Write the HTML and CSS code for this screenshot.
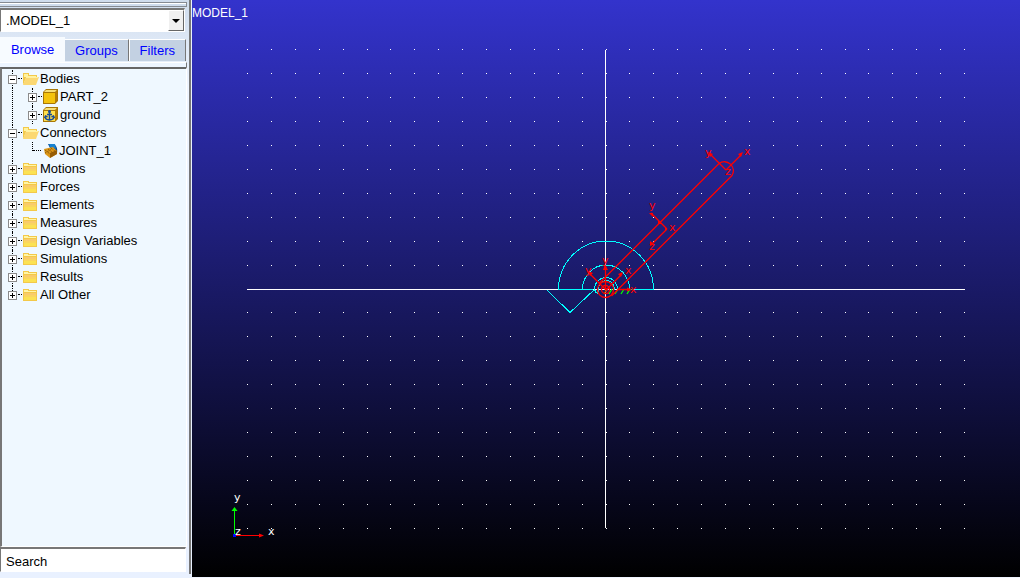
FILE: index.html
```html
<!DOCTYPE html>
<html lang="en">
<head>
<meta charset="utf-8">
<title>Model Browser</title>
<link rel="stylesheet" href="styles.css">
</head>
<body>
<svg class="defs" aria-hidden="true">
  <symbol id="folder" viewBox="0 0 14 12">
    <path fill="#f3c94a" d="M0 0h6v1h8v11H0z"/>
    <path fill="#fff6a8" d="M1 1h4v1h8v1H1z"/>
    <path fill="#f9cb6c" d="M1 4h12v3H1z"/>
    <path fill="#fad55f" d="M1 6h12v2H1z"/>
    <path fill="#fbe253" d="M1 8h12v3H1z"/>
  </symbol>
  <symbol id="open" viewBox="0 0 16 12">
    <path fill="#f3c94a" d="M0 0h6v2h8v3H3L0 12z"/>
    <path fill="#fff3a0" d="M1 1h4v2h8v1H1z"/>
    <path fill="#fbd873" d="M3 4h13l-3 8H0z"/>
    <path fill="#fff0a0" d="M3 4h12v1H3z"/>
  </symbol>
  <symbol id="part" viewBox="0 0 16 16">
    <path fill="#a87706" d="M0 3l3-3h12v12l-3 3H0z"/>
    <path fill="#f7df78" d="M1 3l2-2h11l-2 2z"/>
    <path fill="#f4c30d" d="M1 4h11v10H1z"/>
    <path fill="#b57d06" d="M12 4l2-3v10l-2 3z"/>
  </symbol>
  <symbol id="anchor" viewBox="0 0 16 16">
    <use href="#part" width="16" height="16"/>
    <path fill="#ffe04d" d="M1 4h11v10H1z"/>
    <path fill="none" stroke="#164a9c" stroke-width="1.5" d="M6.500 5v8M4 7.500h5M2 9.500c0 4.500 9 4.500 9 0M1.500 11l1-2 2 1M8.500 10l2-1 1 2"/>
    <circle cx="6.500" cy="4.500" r="1.500" fill="#164a9c"/>
  </symbol>
  <symbol id="joint" viewBox="0 0 16 16">
    <path fill="#074a93" d="M5 1h4c4 0 6 4 5 9l-2 1V7L7 5z"/>
    <path fill="#1682d1" d="M6 1h6l1 5-2-1-1 1-3-2z"/>
    <path fill="#dc9617" d="M1 6l9-2 4 4v3l-7 4-5-4z"/>
    <path fill="#965c05" d="M7 10l7-3v4l-7 4z"/>
    <path stroke="#805006" stroke-dasharray="1 1" d="M2 7l5 4M5 6l5 4M8 5l5 4M2 10l7-4"/>
  </symbol>
</svg>
<div class="app">
  <aside class="sidebar">
    <div class="panel">
      <div class="grip"></div>
      <div class="combo">
        <select class="model" aria-label="Model"><option>.MODEL_1</option></select>
        <span class="arrow" aria-hidden="true"><svg width="8" height="4" viewBox="0 0 8 4"><path d="M0 0h8L4 4z"/></svg></span>
      </div>
      <nav class="tabs">
        <button class="tab active">Browse</button>
        <button class="tab">Groups</button>
        <button class="tab filters">Filters</button>
      </nav>
      <div class="edge"></div>
      <ul class="tree">
        <li class="row"><button class="box minus" aria-label="Collapse Bodies"></button><svg class="icon"><use href="#open" width="16" height="12"/></svg><span class="label">Bodies</span></li>
        <li class="row child"><button class="box" aria-label="Expand PART_2"></button><svg class="cube"><use href="#part" width="16" height="16"/></svg><span class="label">PART_2</span></li>
        <li class="row child"><button class="box" aria-label="Expand ground"></button><svg class="cube"><use href="#anchor" width="16" height="16"/></svg><span class="label">ground</span></li>
        <li class="row"><button class="box minus" aria-label="Collapse Connectors"></button><svg class="icon"><use href="#open" width="16" height="12"/></svg><span class="label">Connectors</span></li>
        <li class="row child leaf"><svg class="cube"><use href="#joint" width="16" height="16"/></svg><span>JOINT_1</span></li>
        <li class="row"><button class="box" aria-label="Expand Motions"></button><svg class="icon"><use href="#folder" width="14" height="12"/></svg><span class="label">Motions</span></li>
        <li class="row"><button class="box" aria-label="Expand Forces"></button><svg class="icon"><use href="#folder" width="14" height="12"/></svg><span class="label">Forces</span></li>
        <li class="row"><button class="box" aria-label="Expand Elements"></button><svg class="icon"><use href="#folder" width="14" height="12"/></svg><span class="label">Elements</span></li>
        <li class="row"><button class="box" aria-label="Expand Measures"></button><svg class="icon"><use href="#folder" width="14" height="12"/></svg><span class="label">Measures</span></li>
        <li class="row"><button class="box" aria-label="Expand Design Variables"></button><svg class="icon"><use href="#folder" width="14" height="12"/></svg><span class="label">Design Variables</span></li>
        <li class="row"><button class="box" aria-label="Expand Simulations"></button><svg class="icon"><use href="#folder" width="14" height="12"/></svg><span class="label">Simulations</span></li>
        <li class="row"><button class="box" aria-label="Expand Results"></button><svg class="icon"><use href="#folder" width="14" height="12"/></svg><span class="label">Results</span></li>
        <li class="row last"><button class="box" aria-label="Expand All Other"></button><svg class="icon"><use href="#folder" width="14" height="12"/></svg><span class="label">All Other</span></li>
      </ul>
      <input class="search" type="text" value="Search" aria-label="Search">
    </div>
    <div class="splitter"></div>
  </aside>
  <main class="view">
    <svg class="scene" viewBox="192 0 828 577" preserveAspectRatio="xMinYMin meet" role="img" aria-label="Model view">
      <g id="grid" fill="#fff" shape-rendering="crispEdges"></g>
      <g class="lines">
        <path stroke="#fff" d="M247 289.500H965M605.500 50V528"/>
        <path stroke="#0ff" d="M547.500 290.500L570 312.500L595 289M558.500 289.500A47.500 48.500 0 0 1 653.500 289.500M582.500 289.500A23.500 24.500 0 0 1 629.500 289.500M594.500 289.500A11.500 12 0 0 1 617.500 289.500M598.500 289.500A8 9 0 0 1 614.500 289.500M594.500 289l1 3 2 1 1-3M559 289.500H593M618 289.500H653"/>
      </g>
      <g class="slopes">
        <path stroke="#0f0" d="M604 294l3-5M609 294l3-5M615 294l3-5M621 294l3-5M627 294l3-5"/>
        <path stroke="#f00" d="M599 283.500L719 163.500A9 9 0 0 1 732 175.500L611.500 296M726 170L711 155M726 170L741 155M667 229L651 213M667 229L651 245M605.500 290V266M606 290L589 273M606 290L622 274M617 289.500H631"/>
        <circle cx="605.500" cy="289.500" r="8" stroke="#f00"/>
        <circle cx="605.500" cy="289.500" r="4" stroke="#f00"/>
      </g>
      <path fill="#f00" d="M708 152l5 2-3 3zM743 152l-5 2 3 3zM649 213l4 0 0 4zM650 246l0-5 4 3zM658 221h3v3h-3zM665 228h2v2h-2zM603 270l2-6 3 6zM588 271l5 2-3 3zM623 272l-5 2 3 3zM632 289.500l-5-2v4z"/>
      <g class="axis red">
        <text x="705" y="156">y</text><text x="744" y="155">x</text><text x="725" y="175">z</text>
        <text x="649" y="209">y</text><text x="669" y="231">x</text><text x="649" y="250">z</text>
        <text x="585" y="274">y</text><text x="602" y="264">y</text><text x="625" y="274">x</text><text x="630" y="293">x</text><text x="603" y="294">z</text>
      </g>
      <path d="M234.500 535V509" stroke="#0f0"/><path d="M234.500 507l3 4h-6z" fill="#0f0"/>
      <path d="M235 535.500H260" stroke="#f00"/><path d="M264 535.500l-5-2v4z" fill="#f00"/>
      <path fill="#00f" d="M233 534h3v3h-3z"/>
      <g class="axis white"><text x="234" y="501">y</text><text x="268" y="535">x</text><text x="235" y="535">z</text></g>
      <text class="name" x="192" y="17">MODEL_1</text>
    </svg>
  </main>
</div>
<script src="grid.js"></script>
</body>
</html>
```
FILE: styles.css
```css
* { box-sizing: border-box; }
body { margin: 0; font: 13px/18px "Liberation Sans", Arial, sans-serif; color: #000; background: #f0f5ff; }
button, input, select { font: inherit; border-radius: 0; }
.defs { position: absolute; width: 0; height: 0; }
.app { display: flex; height: 100vh; }
.sidebar { display: flex; flex: 0 0 192px; background: linear-gradient(#cfdced, #eef5ff 15%, #e9f1ff); }
.panel { display: flex; flex-direction: column; flex: 1; min-width: 0; padding-bottom: 6px; }
.grip { height: 5px; margin: 2px 2px 1px 0; border: 1px solid #858a92; border-left: 0; background: #cfdced; box-shadow: inset 0 1px #fff; }
.combo { display: flex; position: relative; height: 24px; margin-right: 4px; border: 1px solid #fff; border-left: 1px solid #777; border-top: 2px solid #777; background: #fff; }
.model { flex: 1; appearance: none; border: 0; padding: 0 5px; background: #fff; color: #000; }
.arrow { position: absolute; right: 0; top: 0; bottom: 0; width: 16px; display: grid; place-items: center; background: #f0f0f0; border: 1px solid #fff; border-right-color: #666; border-bottom-color: #666; pointer-events: none; }
.tabs { display: flex; align-items: flex-end; height: 30px; padding-right: 3px; }
.tab { flex: 63 1 0; height: 22px; margin-bottom: 1px; padding: 0; border: 0; border-top: 1px solid #fff; border-right: 1px solid #777; background: #c3d1e2; color: #00f; }
.active { height: 25px; margin-bottom: 0; flex-grow: 66; border: 0; background: #f7fbff; }
.filters { flex-grow: 56; border-left: 1px solid #fff; }
.edge { height: 5px; margin-right: 2px; border-top: 1px solid #fff; border-right: 1px solid #777; background: #edf5ff; }
.tree { flex: 1; min-height: 0; margin: 0 2px 0 0; padding: 1px 0 0 6px; list-style: none; border-left: 2px solid #777; border-top: 2px solid #666; border-right: 1px solid #fff; border-bottom: 1px solid #fff; background: #eff8ff; }
.row { position: relative; display: flex; align-items: center; height: 18px; white-space: nowrap; }
.row::before { content: ""; position: absolute; left: 4px; top: 0; bottom: 0; border-left: 1px dotted #000; }
.row::after { content: ""; position: absolute; left: 10px; top: 8px; width: 4px; border-top: 1px dotted #000; }
.last::before { bottom: 9px; }
.box { position: relative; flex: none; width: 9px; height: 9px; padding: 0; border: 1px solid #8b8b8b; background: linear-gradient(#000, #000) center/5px 1px no-repeat, linear-gradient(#000, #000) center/1px 5px no-repeat, #fff; }
.minus { background: linear-gradient(#000, #000) center/5px 1px no-repeat, #fff; }
.icon { flex: none; width: 16px; height: 12px; margin-left: 6px; }
.label { margin-left: 1px; }
.child { padding-left: 20px; background: repeating-linear-gradient(#000 0 1px, #eff8ff 1px 2px) 4px 0/1px 18px no-repeat; }
.child::before { left: 24px; }
.child::after { left: 30px; }
.cube { flex: none; width: 16px; height: 16px; margin-left: 6px; }
.leaf { padding-left: 29px; }
.leaf::before { bottom: 9px; }
.leaf::after { left: 25px; width: 8px; }
.search { width: calc(100% - 3px); height: 25px; margin: 0; padding: 4px 5px 2px; border: 1px solid #fff; border-left-color: #777; border-top: 2px solid #777; background: #fff; color: #000; outline: 0; }
.splitter { width: 3px; margin-bottom: 4px; border-left: 2px solid #777; background: #e9f1ff; }
.view { flex: 1; min-width: 0; margin-bottom: 1px; overflow: hidden; background: linear-gradient(#3333cc, #000); }
.scene { display: block; width: 100%; }
.lines { fill: none; shape-rendering: crispEdges; }
.slopes { fill: none; stroke-width: 1.3; }
.axis { font: 11px "DejaVu Sans", sans-serif; }
.red { fill: #f00; }
.white { fill: #fff; }
.name { font-size: 12px; fill: #fff; }
```
FILE: grid.js
```js
const grid = document.getElementById("grid");
for (let row = 0; row <= 20; row++) {
  for (let col = 0; col <= 30; col++) {
    const dot = document.createElementNS("http://www.w3.org/2000/svg", "rect");
    dot.setAttribute("x", Math.round(247 + col * 717 / 30));
    dot.setAttribute("y", Math.round(49 + row * 479 / 20));
    dot.setAttribute("width", 1);
    dot.setAttribute("height", 1);
    grid.append(dot);
  }
}
```
